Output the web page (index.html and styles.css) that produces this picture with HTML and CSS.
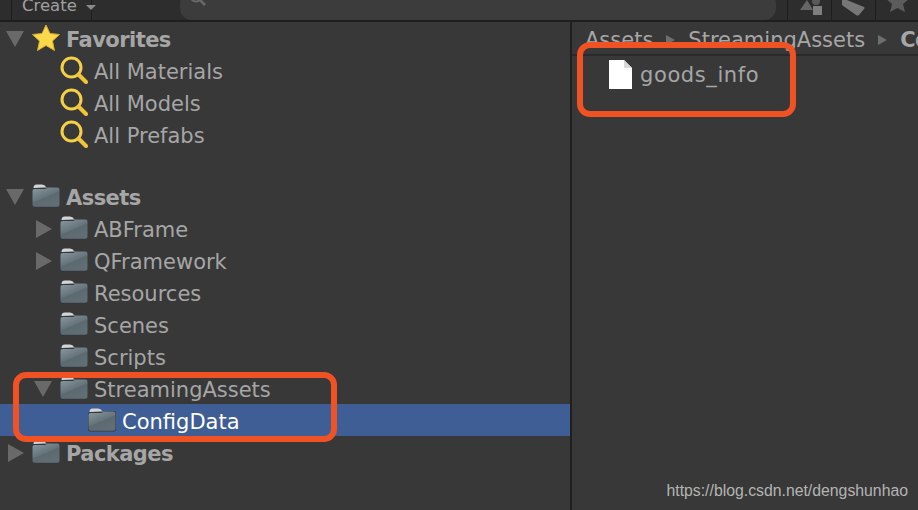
FILE: index.html
```html
<!DOCTYPE html>
<html lang="en">
<head>
    <meta charset="UTF-8">
    <title>Project</title>
    <link rel="stylesheet" href="styles.css">
</head>
<body>
    <svg class="defs" width="0" height="0">
        <defs>
            <linearGradient id="folder-front" x1="0" y1="0" x2="0.6" y2="1">
                <stop offset="0" stop-color="#8a989f"/>
                <stop offset="0.55" stop-color="#66757c"/>
                <stop offset="0.6" stop-color="#5c6a70"/>
                <stop offset="1" stop-color="#626e75"/>
            </linearGradient>
            <symbol id="folder" viewBox="0 0 28 24">
                <path d="M1.500 4Q1.500 0.500 4.500 0.500H10Q13 0.500 14 3L16 4Z" fill="#d2d4d6"/>
                <path d="M0 6Q0 4.500 2 4L14 3.500L26 3Q28 3 28 5V21.500Q28 23.500 26 23.500H2Q0 23.500 0 21.500Z" fill="#33383a"/>
                <path d="M0.500 6.500Q0.500 5 2.500 5H13L16 3.600H25.500Q27.500 3.600 27.500 5.500V21Q27.500 22.800 25.500 22.800H2.500Q0.500 22.800 0.500 21Z" fill="url(#folder-front)"/>
            </symbol>
            <symbol id="search" viewBox="0 0 28 28">
                <circle cx="11.500" cy="11.500" r="9.500" fill="none" stroke="#f5cf45" stroke-width="3"/>
                <path d="M18.500 18.500L26 26" stroke="#f0c53a" stroke-width="4" stroke-linecap="round"/>
            </symbol>
        </defs>
    </svg>

    <header class="toolbar">
        <div class="create-btn">
            <span>Create</span>
            <i class="create-caret"></i>
        </div>
        <div class="search-box">
            <svg width="18" height="18" viewBox="0 0 18 18"><circle cx="7" cy="7" r="5.500" fill="none" stroke="#6a6a6a" stroke-width="2"/><path d="M11 11L16 16" stroke="#6a6a6a" stroke-width="2.500"/></svg>
        </div>
        <div class="tool-btn">
            <svg width="26" height="26" viewBox="0 0 26 26"><path d="M3 20L10 10L16 20Z" fill="#666"/><circle cx="19" cy="11" r="4" fill="#5a5a5a"/><rect x="16" y="16" width="9" height="9" fill="#7e7e7e"/></svg>
        </div>
        <div class="tool-btn">
            <svg width="26" height="26" viewBox="0 0 26 26"><path d="M1 8L23 17Q24 18 23 19L18 25Q17 26 15 25L1 15Z" fill="#777"/></svg>
        </div>
        <div class="tool-btn">
            <svg width="26" height="26" viewBox="0 0 26 26"><path d="M12.500 -2L15 8H25L18 14L20 22L12.500 18L5 22L7 14L0 8H10Z" fill="#5c5c5c"/></svg>
        </div>
    </header>

    <main class="panes">
        <section class="tree">
            <div class="row bold">
                <i class="arrow down"></i>
                <svg class="icon" width="28" height="28" viewBox="0 0 28 28"><path d="M14 1L18 9.500L27.500 10.500L20.500 17L22.500 26.500L14 21.500L5.500 26.500L7.500 17L0.500 10.500L10 9.500Z" fill="#fbd94a" stroke="#d9a92c" stroke-width="1"/></svg>
                <span>Favorites</span>
            </div>
            <div class="row depth-1"><i class="arrow none"></i><svg class="icon"><use href="#search"/></svg><span>All Materials</span></div>
            <div class="row depth-1"><i class="arrow none"></i><svg class="icon"><use href="#search"/></svg><span>All Models</span></div>
            <div class="row depth-1"><i class="arrow none"></i><svg class="icon"><use href="#search"/></svg><span>All Prefabs</span></div>

            <div class="row bold group-start"><i class="arrow down"></i><svg class="icon"><use href="#folder"/></svg><span>Assets</span></div>
            <div class="row depth-1"><i class="arrow right"></i><svg class="icon"><use href="#folder"/></svg><span>ABFrame</span></div>
            <div class="row depth-1"><i class="arrow right"></i><svg class="icon"><use href="#folder"/></svg><span>QFramework</span></div>
            <div class="row depth-1"><i class="arrow none"></i><svg class="icon"><use href="#folder"/></svg><span>Resources</span></div>
            <div class="row depth-1"><i class="arrow none"></i><svg class="icon"><use href="#folder"/></svg><span>Scenes</span></div>
            <div class="row depth-1"><i class="arrow none"></i><svg class="icon"><use href="#folder"/></svg><span>Scripts</span></div>
            <div class="row depth-1"><i class="arrow down"></i><svg class="icon"><use href="#folder"/></svg><span>StreamingAssets</span></div>
            <div class="row depth-2 selected"><i class="arrow none"></i><svg class="icon"><use href="#folder"/></svg><span>ConfigData</span></div>
            <div class="row bold"><i class="arrow right"></i><svg class="icon"><use href="#folder"/></svg><span>Packages</span></div>
        </section>

        <section class="browser">
            <div class="crumbs">
                <span>Assets</span>
                <i class="crumb-sep"></i>
                <span>StreamingAssets</span>
                <i class="crumb-sep"></i>
                <span class="bold">ConfigData</span>
            </div>
            <div class="file">
                <svg width="23" height="29" viewBox="0 0 23 29"><path d="M0 0H15L23 8V29H0Z" fill="#fff"/><path d="M15 0L23 8H16Q15 8 15 7Z" fill="#d8d8d8"/></svg>
                <span>goods_info</span>
            </div>
        </section>
    </main>

    <div class="callout callout-tree"></div>
    <div class="callout callout-file"></div>
    <div class="watermark">https://blog.csdn.net/dengshunhao</div>
</body>
</html>
```

FILE: styles.css
```css
body {
    margin: 0;
    width: 918px;
    height: 510px;
    overflow: hidden;
    position: relative;
    background-color: #383838;
    color: #a6a6a6;
    font-family: 'DejaVu Sans', sans-serif;
    font-size: 21px;
}

.defs {
    position: absolute;
}

.toolbar {
    display: flex;
    align-items: flex-end;
    height: 20px;
    overflow: hidden;
    background-color: #2d2d2d;
    border-bottom: 2px solid #1e1e1e;
}

.create-btn {
    display: flex;
    align-items: center;
    gap: 9px;
    flex: none;
    width: 81px;
    height: 30px;
    margin-left: 11px;
    padding-left: 10px;
    box-sizing: border-box;
    border-left: 1px solid #1e1e1e;
    border-right: 1px solid #1e1e1e;
    font-size: 16.500px;
    color: #a0a0a0;
}

.create-caret {
    width: 0;
    height: 0;
    border-left: 5px solid transparent;
    border-right: 5px solid transparent;
    border-top: 5px solid #8a8a8a;
    margin-top: 4px;
}

.search-box {
    flex: none;
    width: 596px;
    height: 28px;
    margin-left: 88px;
    margin-right: 11px;
    padding-left: 9px;
    box-sizing: border-box;
    border-radius: 12px;
    background-color: #3c3c3c;
}

.search-box svg {
    display: block;
    margin-top: -3px;
}

.tool-btn {
    flex: none;
    display: flex;
    justify-content: center;
    box-sizing: border-box;
    width: 44px;
    height: 30px;
    border-left: 1px solid #1e1e1e;
}

.panes {
    display: flex;
    height: 488px;
}

.tree {
    flex: none;
    width: 570px;
    border-right: 2px solid #1f1f1f;
}

.row {
    display: flex;
    align-items: center;
    height: 32px;
    padding-left: 6px;
    white-space: nowrap;
}

.row span {
    margin-top: 4px;
}

.depth-1 {
    padding-left: 34px;
}

.depth-2 {
    padding-left: 62px;
}

.group-start {
    margin-top: 30px;
}

.bold {
    font-weight: bold;
    letter-spacing: -0.550px;
}

.selected {
    background-color: #3f5e95;
    color: #fff;
}

.arrow {
    flex: none;
    width: 26px;
    height: 16px;
    margin-top: 2px;
    box-sizing: border-box;
}

.arrow.down {
    width: 0;
    height: 0;
    margin-right: 8px;
    border-left: 9px solid transparent;
    border-right: 9px solid transparent;
    border-top: 16px solid #696969;
}

.arrow.right {
    width: 0;
    height: 0;
    margin-left: 2px;
    margin-right: 8px;
    border-top: 9px solid transparent;
    border-bottom: 9px solid transparent;
    border-left: 16px solid #696969;
}

.icon {
    flex: none;
    width: 28px;
    height: 28px;
    margin-right: 6px;
}

.browser {
    flex: 1;
    min-width: 0;
    overflow: hidden;
}

.crumbs {
    display: flex;
    align-items: center;
    gap: 13px;
    height: 34px;
    padding-left: 13px;
    padding-top: 4px;
    box-sizing: border-box;
    border-bottom: 2px solid #2a2a2a;
    white-space: nowrap;
}

.crumb-sep {
    flex: none;
    width: 0;
    height: 0;
    border-top: 5px solid transparent;
    border-bottom: 5px solid transparent;
    border-left: 9px solid #6e6e6e;
}

.file {
    display: flex;
    align-items: center;
    gap: 8px;
    height: 36px;
    padding-left: 37px;
    letter-spacing: 0.6px;
}

.file span {
    margin-top: 2px;
}

.callout {
    position: absolute;
    box-sizing: border-box;
    border: 6px solid #f15223;
    border-radius: 13px;
}

.callout-tree {
    left: 13px;
    top: 372px;
    width: 324px;
    height: 70px;
}

.callout-file {
    left: 577px;
    top: 42px;
    width: 219px;
    height: 75px;
}

.watermark {
    position: absolute;
    right: 10px;
    top: 482px;
    font-family: 'Liberation Sans', sans-serif;
    font-size: 15.800px;
    color: #b4b4b4;
}
```
